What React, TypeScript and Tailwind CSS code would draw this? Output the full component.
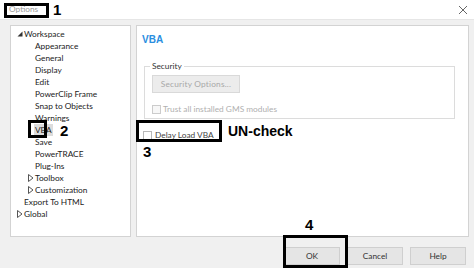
import React from 'react';

type Node = { label: string; level: 0 | 1; arrow?: 'open' | 'closed'; selected?: boolean };

const tree: Node[] = [
  { label: 'Workspace', level: 0, arrow: 'open' },
  { label: 'Appearance', level: 1 },
  { label: 'General', level: 1 },
  { label: 'Display', level: 1 },
  { label: 'Edit', level: 1 },
  { label: 'PowerClip Frame', level: 1 },
  { label: 'Snap to Objects', level: 1 },
  { label: 'Warnings', level: 1 },
  { label: 'VBA', level: 1, selected: true },
  { label: 'Save', level: 1 },
  { label: 'PowerTRACE', level: 1 },
  { label: 'Plug-Ins', level: 1 },
  { label: 'Toolbox', level: 1, arrow: 'closed' },
  { label: 'Customization', level: 1, arrow: 'closed' },
  { label: 'Export To HTML', level: 0 },
  { label: 'Global', level: 0, arrow: 'closed' },
];

function Arrow({ kind }: { kind: 'open' | 'closed' }) {
  if (kind === 'open') {
    return (
      <svg width="6" height="6" viewBox="0 0 6 6">
        <path d="M5.5 0.5 L5.5 5.5 L0.5 5.5 Z" fill="#333" />
      </svg>
    );
  }
  return (
    <svg width="6" height="8" viewBox="0 0 6 8">
      <path d="M0.5 0.5 L5 4 L0.5 7.5 Z" fill="none" stroke="#555" strokeWidth="1" />
    </svg>
  );
}

function Tree() {
  return (
    <div className="flex flex-col pt-[1px]">
      {tree.map((n) => (
        <div
          key={n.label}
          className={`h-[12px] flex items-center whitespace-nowrap ${n.level === 0 ? 'pl-[6px]' : 'pl-[17px]'}`}
        >
          <span className="w-[7px] shrink-0 flex items-center">{n.arrow && <Arrow kind={n.arrow} />}</span>
          <span className={`leading-[12px] ${n.selected ? 'bg-[#dcdcdc] px-[1px] -ml-[1px]' : ''}`}>{n.label}</span>
        </div>
      ))}
    </div>
  );
}

function Btn({ children }: { children: React.ReactNode }) {
  return (
    <div className="w-[56px] h-[18px] flex items-center justify-center bg-[#e5e5e5] border border-[#cfcfcf] text-[#333]">
      {children}
    </div>
  );
}

export default function App() {
  return (
    <div className="relative w-[474px] h-[268px] overflow-hidden bg-[#f0f0f0] font-['Lato',sans-serif] text-[#222] text-[8.3px]">
      {/* title bar */}
      <div className="h-[20px] bg-white flex items-center justify-between pl-[9px] pr-[6px] border-b border-[#e6e6e6]">
        <span className="text-[#9a9a9a]">Options</span>
        <svg width="10" height="10" viewBox="0 0 10 10">
          <path d="M1 1 L9 9 M9 1 L1 9" stroke="#666" strokeWidth="1" />
        </svg>
      </div>

      {/* body */}
      <div className="flex gap-[5px] pl-[10px] pr-[5px] pt-[5px]">
        <div className="w-[121px] h-[212px] bg-white border border-[#d3d3d3] pt-[1px]">
          <Tree />
        </div>
        <div className="flex-1 h-[212px] bg-white border border-[#d3d3d3] px-[5px] pt-[8px]">
          <div className="text-[10px] font-bold text-[#2a8ee0] leading-[12px] font-['Liberation_Sans',sans-serif]">VBA</div>
          <div className="relative mt-[20px] ml-[2px] mr-[8px] h-[53px] border border-[#dcdcdc] px-[7px] pt-[8px]">
            <span className="absolute -top-[7px] left-[5px] bg-white px-[2px] text-[#333] leading-[12px]">Security</span>
            <div className="w-[88px] h-[18px] flex items-center justify-center bg-[#ececec] border border-[#d9d9d9] text-[#a8a8a8] tracking-[0.2px]">
              Security Options...
            </div>
            <div className="flex items-center gap-[2px] mt-[10px] text-[#b0b0b0]">
              <span className="w-[9px] h-[9px] border border-[#cccccc] bg-[#f7f7f7]" />
              <span>Trust all installed GMS modules</span>
            </div>
          </div>
          <div className="flex items-center gap-[3px] mt-[10px] ml-[1px] text-[#444]">
            <span className="w-[9px] h-[9px] border border-[#b8b8b8] bg-white" />
            <span>
              <span className="underline">D</span>elay Load VBA
            </span>
          </div>
        </div>
      </div>

      {/* footer buttons */}
      <div className="flex justify-end gap-[7px] pr-[8px] pt-[10px]">
        <Btn>OK</Btn>
        <Btn>Cancel</Btn>
        <Btn>Help</Btn>
      </div>

      {/* annotations drawn over the dialog */}
      <div className="absolute left-[4px] top-[3px] w-[45px] h-[15px] border-[3px] border-black" />
      <div className="absolute left-[53px] top-[1px] text-[15px] font-bold text-black font-['Liberation_Sans',sans-serif] leading-[18px]">1</div>

      <div className="absolute left-[28px] top-[120px] w-[19px] h-[18px] border-[3px] border-black" />
      <div className="absolute left-[60px] top-[122px] text-[15px] font-bold text-black font-['Liberation_Sans',sans-serif] leading-[18px]">2</div>

      <div className="absolute left-[136px] top-[120px] w-[86px] h-[22px] border-[3px] border-black" />
      <div className="absolute left-[228px] top-[122px] text-[14px] font-bold text-black font-['Liberation_Sans',sans-serif] leading-[18px]">UN-check</div>
      <div className="absolute left-[143px] top-[143px] text-[15px] font-bold text-black font-['Liberation_Sans',sans-serif] leading-[18px]">3</div>

      <div className="absolute left-[305px] top-[216px] text-[15px] font-bold text-black font-['Liberation_Sans',sans-serif] leading-[18px]">4</div>
      <div className="absolute left-[283px] top-[235px] w-[65px] h-[33px] border-[3px] border-black" />
    </div>
  );
}
